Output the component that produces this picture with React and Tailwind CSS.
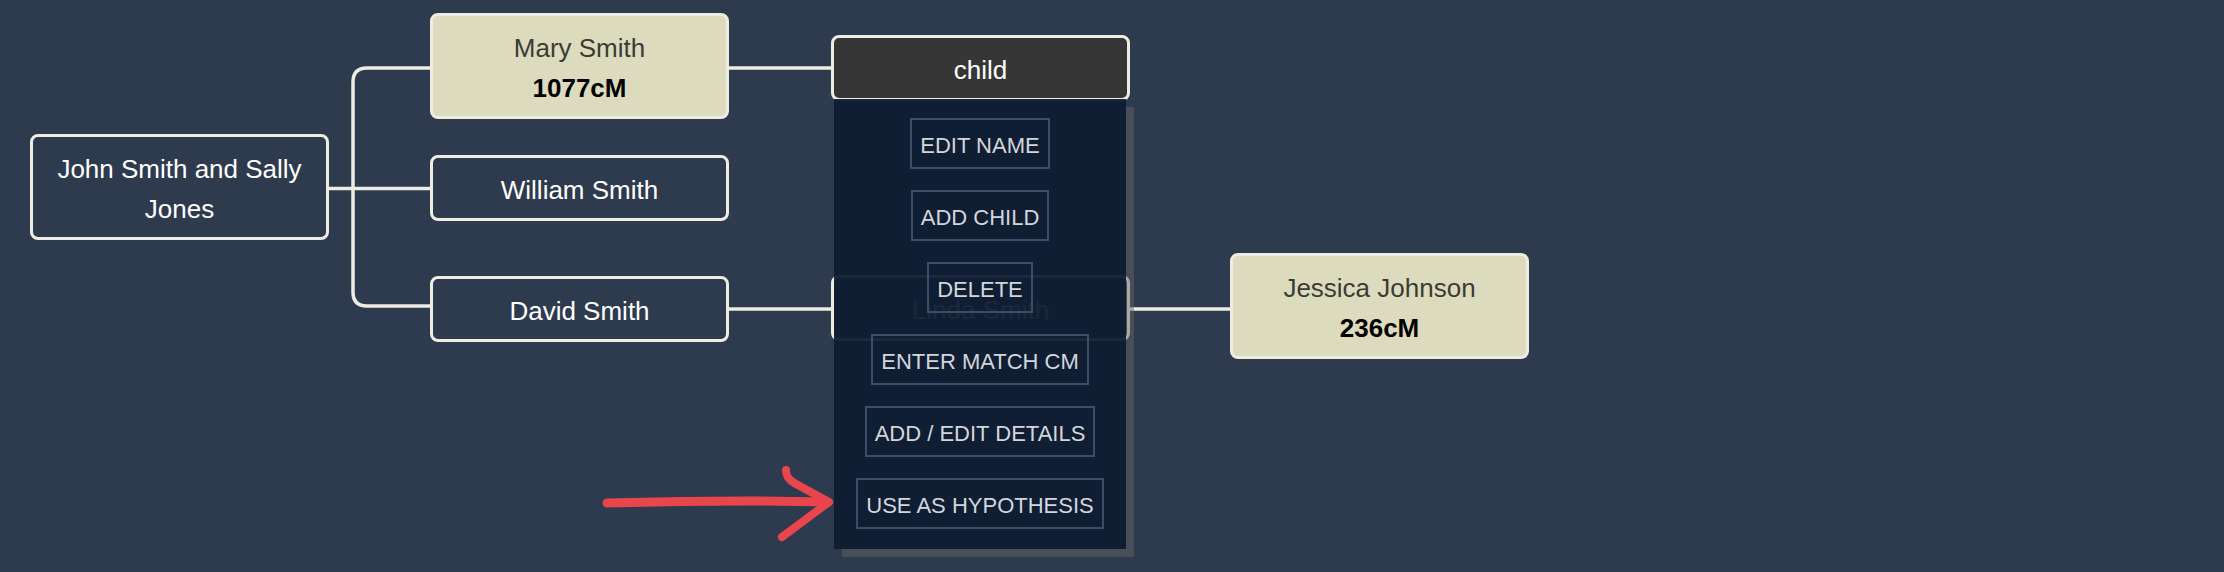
const font = { fontFamily: '"Liberation Sans", Arial, sans-serif' };

function PersonNode({ className, name, cm, dark }) {
  // matched people get the khaki fill, the rest stay transparent
  const fill = cm ? "bg-[#dcdbbd] text-[#3b3b35]" : dark ? "bg-[#363636] text-white" : "bg-[#2e3a4e] text-white";
  return (
    <div className={`absolute w-[299px] border-[3px] border-[#efece2] rounded-lg px-[16px] pt-[12px] pb-[8px] text-center text-[26px] leading-[40px] ${fill} ${className}`}>
      <div>{name}</div>
      {cm && <div className="font-bold text-black">{cm}</div>}
    </div>
  );
}

const menuItems = ["EDIT NAME", "ADD CHILD", "DELETE", "ENTER MATCH CM", "ADD / EDIT DETAILS", "USE AS HYPOTHESIS"];

export default function App() {
  return (
    <div className="relative w-[2224px] h-[572px] overflow-hidden bg-[#2e3a4e]" style={font}>
      <svg className="absolute inset-0" width="2224" height="572" fill="none" stroke="#efece2" strokeWidth="3.5">
        <path d="M329 188.5 H430" />
        <path d="M430 68 H367 Q353 68 353 82 V292 Q353 306 367 306 H430" />
        <path d="M728 68 H831" />
        <path d="M728 309 H831" />
        <path d="M1129 309 H1230" />
      </svg>

      <PersonNode className="left-[30px] top-[134px]" name="John Smith and Sally Jones" />
      <PersonNode className="left-[430px] top-[13px]" name="Mary Smith" cm="1077cM" />
      <PersonNode className="left-[430px] top-[155px]" name="William Smith" />
      <PersonNode className="left-[430px] top-[276px]" name="David Smith" />
      <PersonNode className="left-[831px] top-[35px]" name="child" dark />
      <PersonNode className="left-[831px] top-[275px]" name="Linda Smith" />
      <PersonNode className="left-[1230px] top-[253px]" name="Jessica Johnson" cm="236cM" />

      <div className="absolute left-[834px] top-[99px] w-[292px] h-[450px] bg-[rgba(15,28,49,0.95)] shadow-[8px_8px_0_rgba(100,100,100,0.5)] flex flex-col items-center pt-[19px] gap-[21px]">
        {menuItems.map(item => (
          <button key={item} className="border-2 border-[#3c4d67] px-[8px] pt-[9px] pb-[5px] text-[22px] leading-[33px] text-[#d3d6dc] whitespace-nowrap">
            {item}
          </button>
        ))}
      </div>

      <svg className="absolute left-[590px] top-[455px]" width="260" height="95" viewBox="590 455 260 95" fill="none" stroke="#e8454d" strokeLinecap="round" strokeLinejoin="round">
        <path d="M607 503 C680 501 760 500 828 502" strokeWidth="9" />
        <path d="M786 470 C786 476 788 479 796 484 L829 502 L782 537" strokeWidth="8" />
      </svg>
    </div>
  );
}
